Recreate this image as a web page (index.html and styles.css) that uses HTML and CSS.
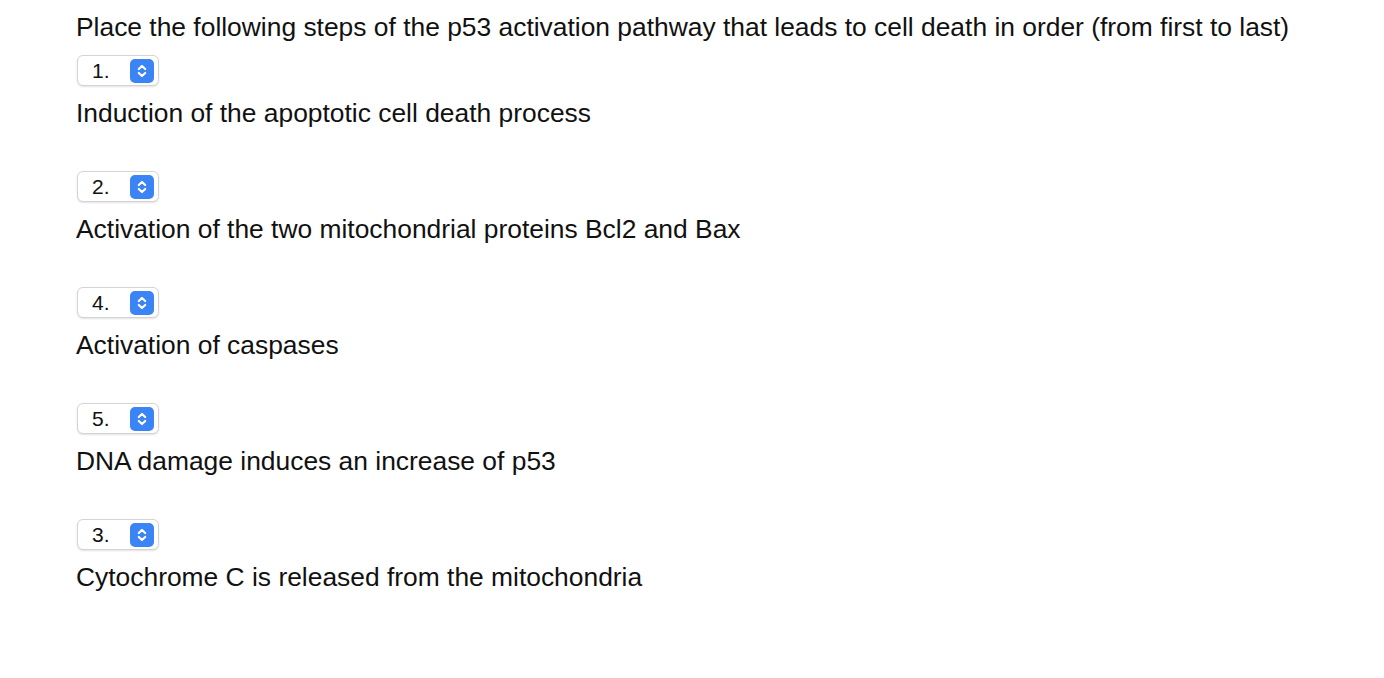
FILE: index.html
```html
<!DOCTYPE html>
<html lang="en">
<head>
    <meta charset="UTF-8">
    <meta name="viewport" content="width=device-width, initial-scale=1.0">
    <title>p53 Pathway Ordering</title>
    <link rel="stylesheet" href="styles.css">
</head>
<body>
    <div class="question">
        <h1 class="prompt">Place the following steps of the p53 activation pathway that leads to cell death in order (from first to last)</h1>

        <div class="step">
            <div class="picker"><span class="picker-value">1.</span><span class="picker-btn"><svg viewBox="0 0 24 24" width="24" height="24"><path d="M8.8 10 L12 7 L15.2 10 M8.8 14 L12 17 L15.2 14" fill="none" stroke="#fff" stroke-width="2.2" stroke-linecap="round" stroke-linejoin="round"/></svg></span></div>
            <p class="step-text">Induction of the apoptotic cell death process</p>
        </div>

        <div class="step">
            <div class="picker"><span class="picker-value">2.</span><span class="picker-btn"><svg viewBox="0 0 24 24" width="24" height="24"><path d="M8.8 10 L12 7 L15.2 10 M8.8 14 L12 17 L15.2 14" fill="none" stroke="#fff" stroke-width="2.2" stroke-linecap="round" stroke-linejoin="round"/></svg></span></div>
            <p class="step-text">Activation of the two mitochondrial proteins Bcl2 and Bax</p>
        </div>

        <div class="step">
            <div class="picker"><span class="picker-value">4.</span><span class="picker-btn"><svg viewBox="0 0 24 24" width="24" height="24"><path d="M8.8 10 L12 7 L15.2 10 M8.8 14 L12 17 L15.2 14" fill="none" stroke="#fff" stroke-width="2.2" stroke-linecap="round" stroke-linejoin="round"/></svg></span></div>
            <p class="step-text">Activation of caspases</p>
        </div>

        <div class="step">
            <div class="picker"><span class="picker-value">5.</span><span class="picker-btn"><svg viewBox="0 0 24 24" width="24" height="24"><path d="M8.8 10 L12 7 L15.2 10 M8.8 14 L12 17 L15.2 14" fill="none" stroke="#fff" stroke-width="2.2" stroke-linecap="round" stroke-linejoin="round"/></svg></span></div>
            <p class="step-text">DNA damage induces an increase of p53</p>
        </div>

        <div class="step">
            <div class="picker"><span class="picker-value">3.</span><span class="picker-btn"><svg viewBox="0 0 24 24" width="24" height="24"><path d="M8.8 10 L12 7 L15.2 10 M8.8 14 L12 17 L15.2 14" fill="none" stroke="#fff" stroke-width="2.2" stroke-linecap="round" stroke-linejoin="round"/></svg></span></div>
            <p class="step-text">Cytochrome C is released from the mitochondria</p>
        </div>
    </div>
</body>
</html>
```

FILE: styles.css
```css
:root {
    --text-color: #111111;
    --picker-border: #d4d4d4;
    --picker-blue: #3a84f5;
}

body {
    margin: 0;
    background: #ffffff;
    color: var(--text-color);
    font-family: "Liberation Sans", Arial, sans-serif;
}

.question {
    padding: 12px 0 0 76px;
}

.prompt {
    margin: 0;
    font-size: 26.4px;
    font-weight: normal;
    line-height: 30px;
}

.step {
    display: flex;
    flex-direction: column;
    align-items: flex-start;
    margin-top: 13px;
}

.step + .step {
    margin-top: 43px;
}

.picker {
    display: flex;
    align-items: center;
    justify-content: space-between;
    box-sizing: border-box;
    width: 82px;
    height: 31px;
    margin-left: 1px;
    padding: 0 4px 0 14px;
    background: #ffffff;
    border: 1px solid var(--picker-border);
    border-radius: 6px;
    box-shadow: 0 1px 2px rgba(0, 0, 0, 0.12);
}

.picker-value {
    font-size: 21px;
    line-height: 1;
}

.picker-btn {
    display: flex;
    width: 24px;
    height: 24px;
    background: var(--picker-blue);
    border-radius: 5px;
}

.step-text {
    margin: 12px 0 0;
    font-size: 26.4px;
    line-height: 30px;
}
```
